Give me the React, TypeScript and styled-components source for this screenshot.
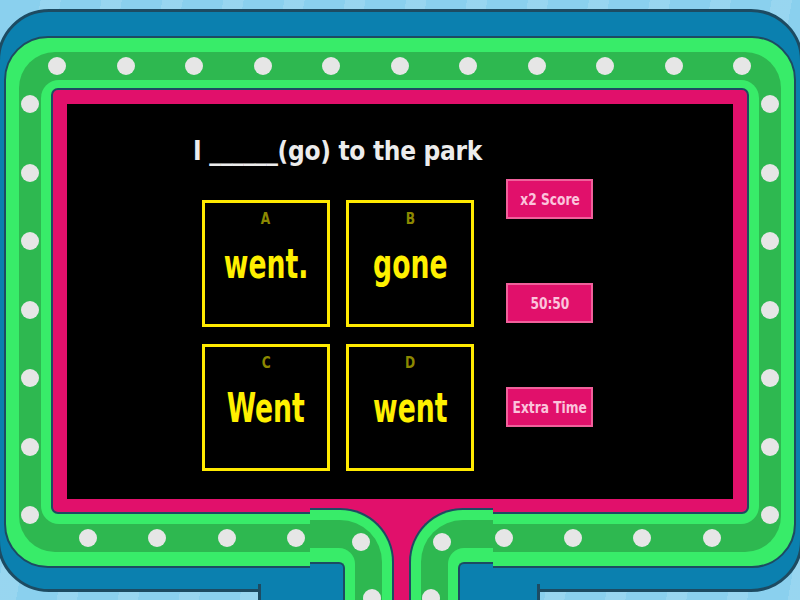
import styled, { createGlobalStyle } from "styled-components";

const SKY = "#8ad0ee";
const BLUE = "#0b80af";
const EDGE = "#1d4b62";
const LIME = "#38ec69";
const GREEN = "#2eb850";
const PINK = "#e1106b";
const YELLOW = "#fff000";

const GlobalStyle = createGlobalStyle`
  html, body {
    margin: 0;
    padding: 0;
    background: ${SKY};
  }
  * {
    box-sizing: border-box;
  }
`;

// studio backdrop with faint spotlight rays
const Stage = styled.div`
  position: relative;
  width: 800px;
  height: 600px;
  overflow: hidden;
  display: flex;
  flex-direction: column;
  padding: 9px 0 12px;
  background-color: ${SKY};
  background-image: repeating-linear-gradient(
    100deg,
    transparent 0 40px,
    rgba(255, 255, 255, 0.12) 40px 60px
  );
`;

// outer blue casing of the board
const Casing = styled.div`
  flex: 1;
  display: flex;
  margin: 0 -3px;
  padding: 24px 4px 21px;
  background: ${BLUE};
  border: 3px solid ${EDGE};
  border-radius: 52px;
`;

const LimeRim = styled.div`
  flex: 1;
  display: flex;
  padding: 14px 13px;
  background: ${LIME};
  border: 2px solid ${EDGE};
  border-radius: 44px;
`;

const BulbBand = styled.div`
  flex: 1;
  display: grid;
  grid-template-columns: 22px 1fr 22px;
  grid-template-rows: 28px 1fr 28px;
  background: ${GREEN};
  border-radius: 36px;
`;

const Dot = styled.span`
  flex-shrink: 0;
  width: 18px;
  height: 18px;
  border-radius: 50%;
  background: #e6e6e6;
`;

const TopBulbs = styled.div`
  grid-column: 1 / -1;
  grid-row: 1;
  display: flex;
  align-items: center;
  gap: 50.5px;
  padding-left: 29px;
`;

const BottomBulbs = styled.div`
  grid-column: 1 / -1;
  grid-row: 3;
  display: flex;
  align-items: center;
  gap: 51.3px;
  padding-left: 60px;
`;

const SideBulbs = styled.div<{ $col: number }>`
  grid-column: ${(p) => p.$col};
  grid-row: 2;
  display: flex;
  flex-direction: column;
  align-items: center;
  gap: 50.5px;
  padding-top: 15px;
`;

const InnerRim = styled.div`
  grid-column: 2;
  grid-row: 2;
  display: flex;
  padding: 8px 10px 10px;
  background: ${LIME};
  border-radius: 18px;
`;

const PinkFrame = styled.div`
  flex: 1;
  display: flex;
  padding: 14px 14px 13px;
  background: ${PINK};
  border: 2px solid ${EDGE};
  border-radius: 7px;
`;

const Screen = styled.div`
  flex: 1;
  display: grid;
  grid-template-columns: 272px 87px;
  column-gap: 32px;
  align-content: start;
  padding: 32px 0 0 135px;
  background: #000;
`;

const Question = styled.div`
  grid-column: 1 / -1;
  margin-left: -9px;
  white-space: nowrap;
  font-family: "DejaVu Sans Condensed", "DejaVu Sans", sans-serif;
  font-weight: 700;
  font-size: 26px;
  line-height: 30px;
  letter-spacing: -0.3px;
  color: #ececec;
`;

const Answers = styled.div`
  grid-column: 1;
  grid-row: 2;
  display: grid;
  grid-template-columns: repeat(2, 128px);
  grid-auto-rows: 127px;
  column-gap: 16px;
  row-gap: 17px;
  margin-top: 34px;
`;

const AnswerBox = styled.div`
  display: grid;
  grid-template-rows: 30px 1fr 30px;
  justify-items: center;
  align-items: center;
  border: 3px solid #ffea00;
  font-family: "DejaVu Sans Condensed", "DejaVu Sans", sans-serif;
  font-weight: 700;
`;

const Letter = styled.span`
  font-size: 16px;
  color: #8c8800;
  transform: scaleX(0.85);
`;

const Word = styled.span`
  font-size: 40px;
  line-height: 1;
  white-space: nowrap;
  color: ${YELLOW};
  transform: scaleX(0.74);
`;

const PowerUps = styled.div`
  grid-column: 2;
  grid-row: 2;
  display: flex;
  flex-direction: column;
  gap: 64px;
  margin-top: 13px;
`;

const PowerButton = styled.button`
  width: 87px;
  height: 40px;
  padding: 0;
  display: flex;
  align-items: center;
  justify-content: center;
  background: ${PINK};
  border: 2px solid #f0609b;
  cursor: pointer;
`;

const PowerLabel = styled.span`
  white-space: nowrap;
  color: #fbc4dc;
  font-family: "DejaVu Sans Condensed", "DejaVu Sans", sans-serif;
  font-weight: 700;
  font-size: 16px;
  transform: scaleX(0.85);
`;

// the stand under the board
const StandBody = styled.div`
  position: absolute;
  left: 258px;
  top: 584px;
  width: 282px;
  height: 20px;
  background: ${BLUE};
  border-left: 3px solid ${EDGE};
  border-right: 3px solid ${EDGE};
`;

const StandNeck = styled.div`
  position: absolute;
  left: 340px;
  top: 500px;
  width: 130px;
  height: 100px;
  background: ${PINK};
`;

const Arm = styled.div<{ $mirror?: boolean }>`
  position: absolute;
  top: 508px;
  left: ${(p) => (p.$mirror ? 409 : 310)}px;
  width: 84px;
  height: 100px;
  display: flex;
  padding: 10px 10px 0 0;
  background: ${LIME};
  border-top: 2px solid ${EDGE};
  border-right: 2px solid ${EDGE};
  border-top-right-radius: 54px;
  transform: ${(p) => (p.$mirror ? "scaleX(-1)" : "none")};
`;

const ArmBand = styled.div`
  position: relative;
  flex: 1;
  display: flex;
  padding: 28px 27px 0 0;
  background: ${GREEN};
  border-top-right-radius: 42px;
`;

const ArmBulb = styled(Dot)<{ $x: number; $y: number }>`
  position: absolute;
  left: ${(p) => p.$x}px;
  top: ${(p) => p.$y}px;
`;

const ArmInner = styled.div`
  flex: 1;
  display: flex;
  padding: 14px 10px 0 0;
  background: ${LIME};
  border-top-right-radius: 16px;
`;

const ArmHole = styled.div`
  flex: 1;
  background: ${BLUE};
  border-top: 2px solid ${EDGE};
  border-right: 2px solid ${EDGE};
  border-top-right-radius: 6px;
`;

const answers = [
  { letter: "A", text: "went." },
  { letter: "B", text: "gone" },
  { letter: "C", text: "Went" },
  { letter: "D", text: "went" },
];

const powerUps = ["x2 Score", "50:50", "Extra Time"];

const row = (n: number) => Array.from({ length: n }, (_, i) => <Dot key={i} />);

const StandArm = ({ mirror }: { mirror?: boolean }) => (
  <Arm $mirror={mirror}>
    <ArmBand>
      <ArmBulb $x={42} $y={13} />
      <ArmBulb $x={53} $y={69} />
      <ArmInner>
        <ArmHole />
      </ArmInner>
    </ArmBand>
  </Arm>
);

export default function App() {
  return (
    <Stage>
      <GlobalStyle />
      <Casing>
        <LimeRim>
          <BulbBand>
            <TopBulbs>{row(11)}</TopBulbs>
            <SideBulbs $col={1}>{row(7)}</SideBulbs>
            <InnerRim>
              <PinkFrame>
                <Screen>
                  <Question>I ______(go) to the park</Question>
                  <Answers>
                    {answers.map((a) => (
                      <AnswerBox key={a.letter}>
                        <Letter>{a.letter}</Letter>
                        <Word>{a.text}</Word>
                      </AnswerBox>
                    ))}
                  </Answers>
                  <PowerUps>
                    {powerUps.map((p) => (
                      <PowerButton key={p}>
                        <PowerLabel>{p}</PowerLabel>
                      </PowerButton>
                    ))}
                  </PowerUps>
                </Screen>
              </PinkFrame>
            </InnerRim>
            <SideBulbs $col={3}>{row(7)}</SideBulbs>
            <BottomBulbs>{row(10)}</BottomBulbs>
          </BulbBand>
        </LimeRim>
      </Casing>
      <StandBody />
      <StandNeck />
      <StandArm />
      <StandArm mirror />
    </Stage>
  );
}
